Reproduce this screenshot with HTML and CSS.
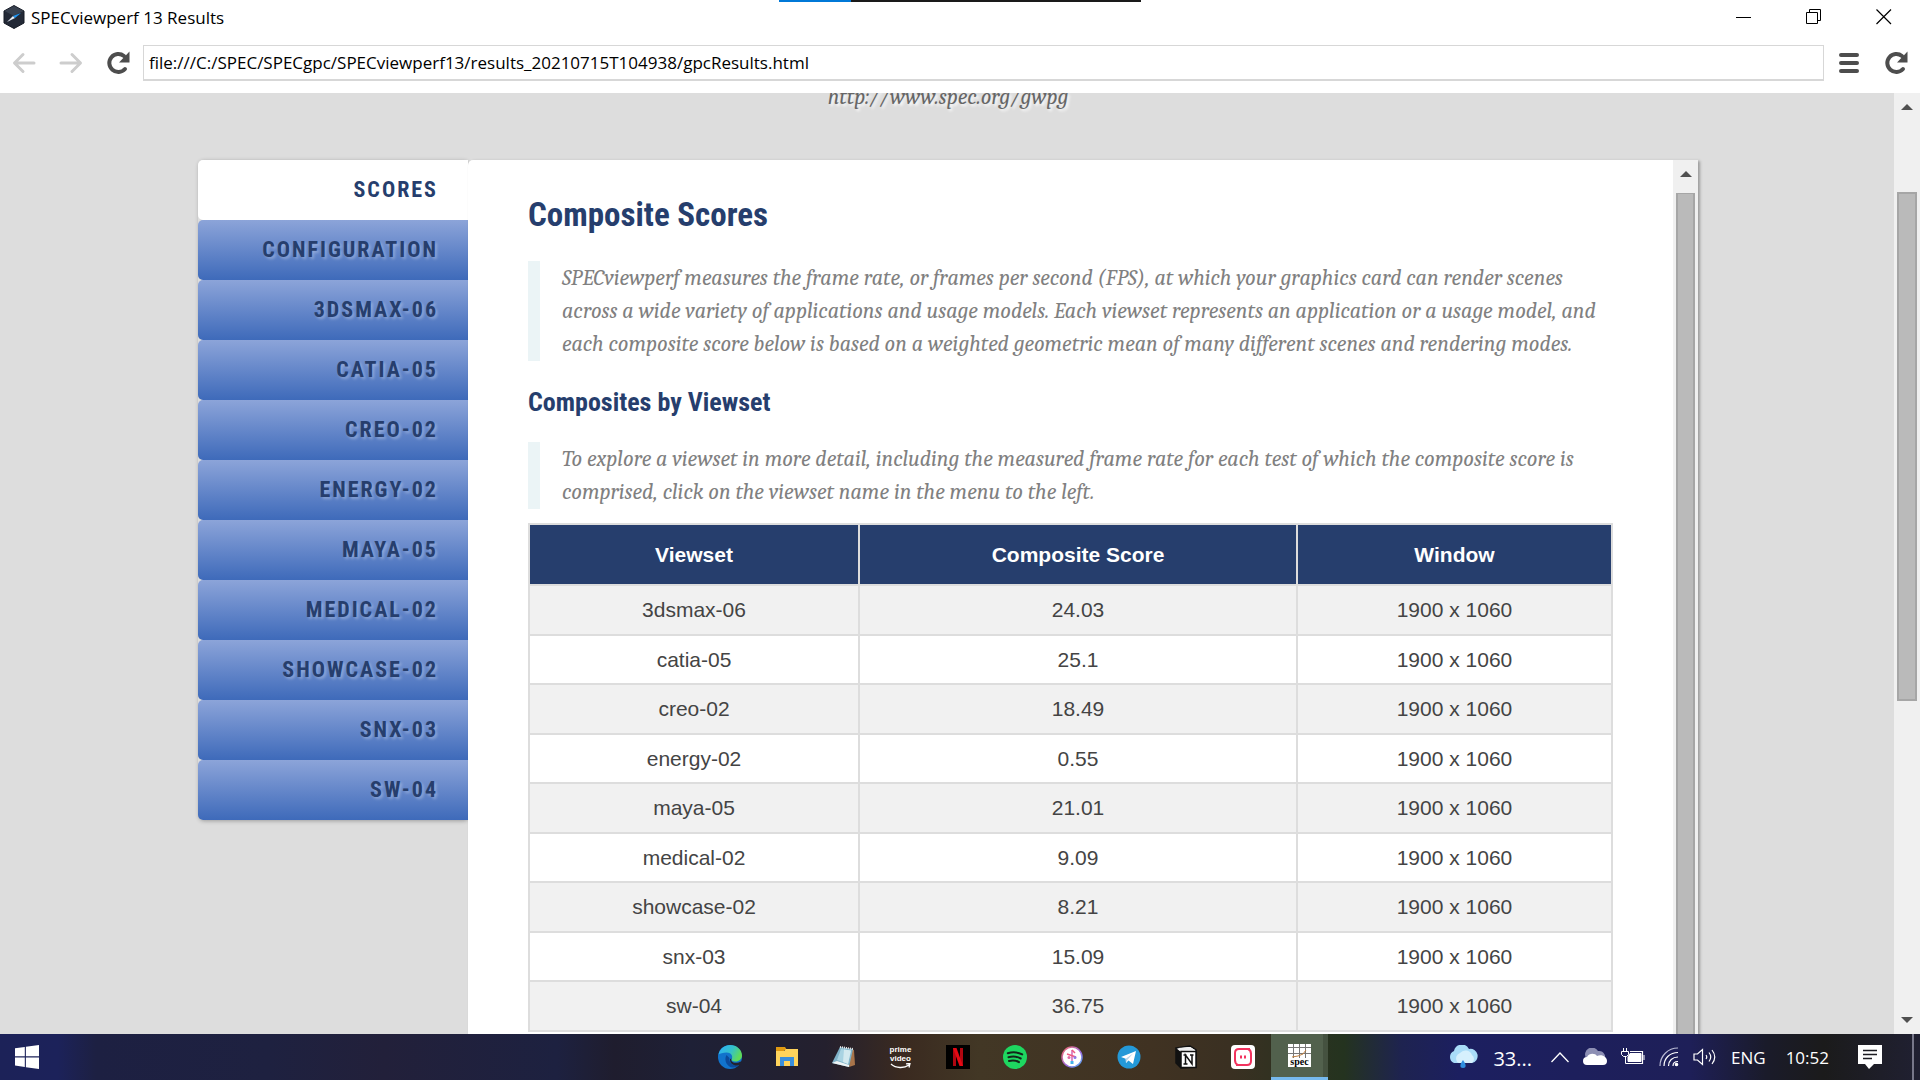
FILE: index.html
```html
<!DOCTYPE html>
<html lang="en">
<head>
  <meta charset="UTF-8">
  <meta name="viewport" content="width=device-width, initial-scale=1">
  <title>SPECviewperf 13 Results</title>
  <link rel="stylesheet" href="styles.css">
</head>
<body>
  <div class="snap-hint"><span></span></div>

  <div class="titlebar">
    <svg class="app-icon" width="22" height="24" viewBox="0 0 22 24">
      <path d="M11 0.500L21 6v12l-10 5.500L1 18V6z" fill="#232936" stroke="#151a24"/>
      <path d="M11 1l9.500 5L11 11 1.500 6z" fill="#39414f"/>
      <path d="M4 17l6-6 2 2z" fill="#e8eef5"/>
      <path d="M18 8l-8 3 2 2z" fill="#2196f3"/>
    </svg>
    <span class="title">SPECviewperf 13 Results</span>
    <div class="window-controls">
      <button aria-label="Minimize"><svg width="16" height="16"><path d="M0 8.500h15" stroke="#000"/></svg></button>
      <button aria-label="Restore"><svg width="16" height="16" fill="none" stroke="#000"><path d="M0.500 3.500h11v11h-11zM3.500 3.500v-3h11v11h-3"/></svg></button>
      <button aria-label="Close"><svg width="16" height="16"><path d="M0.500 0.500l14.500 14.500M15 0.500L0.500 15" stroke="#000" stroke-width="1.200"/></svg></button>
    </div>
  </div>

  <div class="toolbar">
    <button class="nav-btn" aria-label="Back"><svg width="24" height="24" viewBox="0 0 24 24"><path d="M22 12H3M11 3.500L2.500 12l8.500 8.500" fill="none" stroke="#cdcdcd" stroke-width="3" stroke-linecap="round" stroke-linejoin="round"/></svg></button>
    <button class="nav-btn" aria-label="Forward"><svg width="24" height="24" viewBox="0 0 24 24"><path d="M2 12h19M13 3.500l8.500 8.500-8.500 8.500" fill="none" stroke="#cdcdcd" stroke-width="3" stroke-linecap="round" stroke-linejoin="round"/></svg></button>
    <button class="nav-btn" aria-label="Reload"><svg width="24" height="24" viewBox="0 0 24 24"><path d="M19 18a9 9 0 1 1-1-13" fill="none" stroke="#4d4d4d" stroke-width="4" stroke-linecap="round"/><path d="M23.500 0.500v11H13z" fill="#4d4d4d"/></svg></button>
    <input class="address" type="text" aria-label="Address" value="file:///C:/SPEC/SPECgpc/SPECviewperf13/results_20210715T104938/gpcResults.html">
    <button class="nav-btn" aria-label="Menu"><svg width="20" height="22" viewBox="0 0 20 22"><path d="M2 3h16M2 11h16M2 19h16" stroke="#4d4d4d" stroke-width="4" stroke-linecap="round"/></svg></button>
    <button class="nav-btn" aria-label="Refresh"><svg width="24" height="24" viewBox="0 0 24 24"><path d="M19 18a9 9 0 1 1-1-13" fill="none" stroke="#4d4d4d" stroke-width="4" stroke-linecap="round"/><path d="M23.500 0.500v11H13z" fill="#4d4d4d"/></svg></button>
  </div>

  <div class="viewport">
    <div class="page">
      <p class="site-link"><a href="#">http://www.spec.org/gwpg</a></p>
      <div class="results">
        <nav class="tabs">
          <a class="active" href="#">Scores</a>
          <a href="#">Configuration</a>
          <a href="#">3dsmax-06</a>
          <a href="#">catia-05</a>
          <a href="#">creo-02</a>
          <a href="#">energy-02</a>
          <a href="#">maya-05</a>
          <a href="#">medical-02</a>
          <a href="#">showcase-02</a>
          <a href="#">snx-03</a>
          <a href="#">sw-04</a>
        </nav>
        <main class="panel">
          <div class="content">
            <h1>Composite Scores</h1>
            <blockquote>SPECviewperf measures the frame rate, or frames per second (FPS), at which your graphics card can render scenes across a wide variety of applications and usage models. Each viewset represents an application or a usage model, and each composite score below is based on a weighted geometric mean of many different scenes and rendering modes.</blockquote>
            <h2>Composites by Viewset</h2>
            <blockquote>To explore a viewset in more detail, including the measured frame rate for each test of which the composite score is comprised, click on the viewset name in the menu to the left.</blockquote>
            <table>
              <thead>
                <tr><th class="col-viewset">Viewset</th><th class="col-score">Composite Score</th><th>Window</th></tr>
              </thead>
              <tbody>
                <tr><td>3dsmax-06</td><td>24.03</td><td>1900 x 1060</td></tr>
                <tr><td>catia-05</td><td>25.1</td><td>1900 x 1060</td></tr>
                <tr><td>creo-02</td><td>18.49</td><td>1900 x 1060</td></tr>
                <tr><td>energy-02</td><td>0.55</td><td>1900 x 1060</td></tr>
                <tr><td>maya-05</td><td>21.01</td><td>1900 x 1060</td></tr>
                <tr><td>medical-02</td><td>9.09</td><td>1900 x 1060</td></tr>
                <tr><td>showcase-02</td><td>8.21</td><td>1900 x 1060</td></tr>
                <tr><td>snx-03</td><td>15.09</td><td>1900 x 1060</td></tr>
                <tr><td>sw-04</td><td>36.75</td><td>1900 x 1060</td></tr>
              </tbody>
            </table>
          </div>
          <div class="scrollbar inner">
            <div class="arrow up"></div>
            <div class="thumb"></div>
          </div>
        </main>
      </div>
    </div>
    <div class="scrollbar outer">
      <div class="arrow up"></div>
      <div class="track"><div class="thumb"></div></div>
      <div class="arrow down"></div>
    </div>
  </div>

  <footer class="taskbar">
    <button class="start" aria-label="Start">
      <svg width="24" height="24" viewBox="0 0 24 24" fill="#fff"><path d="M0 3.300l9.800-1.400V11.300H0zM10.900 1.700L24 0v11.300H10.900zM0 12.400h9.800v9.500L0 20.500zM10.900 12.400H24V24l-13.100-1.800z"/></svg>
    </button>

    <div class="apps">
      <!-- Edge -->
      <button aria-label="Edge">
        <svg width="24" height="24" viewBox="0 0 24 24">
          <defs>
            <linearGradient id="edge" x1="0" y1="0" x2="1" y2="0.400"><stop offset="0.200" stop-color="#2fb4ea"/><stop offset="0.600" stop-color="#35c1c8"/><stop offset="1" stop-color="#5fdb58"/></linearGradient>
          </defs>
          <circle cx="12" cy="12" r="12" fill="#1173cc"/>
          <path d="M0.500 9.500C2 3.500 6.500 0 12 0c7 0 12 5 12 10.500 0 3.500-3 6-6.500 6-3 0-4.500-1.500-3.800-2.500 1.300-2 .3-6.500-5.200-6.500-3.500 0-6.500 1-8 2z" fill="url(#edge)"/>
          <path d="M8.500 10c-3 5 .5 12.500 6.500 12.500 3 0 5-1.200 6.500-2.800-5 2-11-1-10-6.700z" fill="#0b4a9b"/>
          <path d="M13.500 13.500c-1.500 3 3 6.500 10.500 2.500l-2 4c-5 1.500-10.500-.5-10-6z" fill="#21222f"/>
        </svg>
      </button>
      <!-- File Explorer -->
      <button aria-label="File Explorer">
        <svg width="24" height="20" viewBox="0 0 24 20"><path d="M1 0h9l2 3h-3v2H1z" fill="#e09a12"/><path d="M1 4h8l2-2h12v17H1z" fill="#ffd45c"/><path d="M5 19v-9h14v9h-4v-5H9v5z" fill="#3a8fdc"/></svg>
      </button>
      <!-- Notepad -->
      <button aria-label="Notepad">
        <svg width="24" height="22" viewBox="0 0 24 22"><path d="M19 3l3 1 1 15-6 2z" fill="#a8744a"/><path d="M8 1l13 2-4 18L0 17z" fill="#7fb2c8"/><path d="M9 3l10 1.500L16 18 5 14z" fill="#a9d3e2"/><path d="M12 3.500l7 1L16 18l-5-2z" fill="#d3e9ef"/><path d="M0 17l5-2 12 4v2z" fill="#eef4f5"/><path d="M8 1l13 2" stroke="#e8e8e8" stroke-width="2" stroke-dasharray="1 1"/></svg>
      </button>
      <!-- Prime Video -->
      <button aria-label="Prime Video">
        <span class="prime">prime</span>
        <span class="prime">video</span>
        <svg width="22" height="6" viewBox="0 0 22 6"><path d="M1 1c5 4.500 13 4.500 18 1M16 .8l4-.3-1 4" fill="none" stroke="#fff" stroke-width="1.300"/></svg>
      </button>
      <!-- Netflix -->
      <button aria-label="Netflix">
        <svg width="24" height="24" viewBox="0 0 24 24"><path d="M0 0h24v24H0z" fill="#000"/><path d="M7 3h3v18H7zM14 3h3v18h-3z" fill="#b00610"/><path d="M7 3h3.500L17 21h-3.500z" fill="#e50914"/></svg>
      </button>
      <!-- Spotify -->
      <button aria-label="Spotify">
        <svg width="24" height="24" viewBox="0 0 24 24"><circle cx="12" cy="12" r="12" fill="#1ed760"/><path d="M4.800 8.200c5-1.400 10.200-1 14.400 1.200M5.500 12.300c4.300-1.200 8.500-.8 12.200 1.200M6 16c3.500-.9 7-.6 10 1.100" fill="none" stroke="#14261a" stroke-width="2" stroke-linecap="round"/></svg>
      </button>
      <!-- iTunes -->
      <button aria-label="iTunes">
        <svg width="22" height="22" viewBox="0 0 22 22"><defs><linearGradient id="tune" x1="0" y1="0" x2="1" y2="1"><stop offset="0" stop-color="#f46a6a"/><stop offset="0.600" stop-color="#9a6ae0"/><stop offset="1" stop-color="#4db3f5"/></linearGradient></defs><circle cx="11" cy="11" r="10" fill="#fff" stroke="url(#tune)" stroke-width="1.500"/><path d="M11 4v11" stroke="#d268b8" stroke-width="1.500"/><path d="M11 4l3 3M6 8l9 3" stroke="#ee5a80" stroke-width="1.500"/><circle cx="8" cy="11.500" r="1.500" fill="#e06aa6"/><circle cx="14" cy="11.500" r="1.500" fill="#8f7be8"/><path d="M11 15v3" stroke="#45b2ea" stroke-width="3"/></svg>
      </button>
      <!-- Telegram -->
      <button aria-label="Telegram">
        <svg width="24" height="24" viewBox="0 0 24 24"><circle cx="12" cy="12" r="11.500" fill="#2499d8"/><path d="M4 12l15-6-3 13-4.500-3.500L9 18l-.3-4.300z" fill="#fff"/><path d="M8.700 13.700L16 8.500l-5.500 6.300L9 18z" fill="#b6d4e8"/></svg>
      </button>
      <!-- Notion -->
      <button aria-label="Notion">
        <svg width="22" height="24" viewBox="0 0 22 24"><path d="M1 3l14-2 6 4v17l-15 1-5-5z" fill="#fff" stroke="#111" stroke-width="1.500"/><path d="M1 3l5 4v16l-5-5z" fill="#111"/><path d="M3 3l12-1 5 3-14 1z" fill="#eee"/><path d="M6 6.500h15v16H6z" fill="#fff" stroke="#111" stroke-width="1.500"/><path d="M10.500 19v-9l6.500 9v-9M8.500 10h3M15 10h3.500M8.500 19h4" fill="none" stroke="#111" stroke-width="1.500"/></svg>
      </button>
      <!-- Player -->
      <button aria-label="Player">
        <svg width="24" height="24" viewBox="0 0 24 24"><rect width="24" height="24" rx="4" fill="#fff"/><path d="M4 16V8q0-4 4-4h11M20 8v8q0 4-4 4H5M4 15q0 4 3 5M20 9q0-4-3-5" fill="none" stroke="#f2335e" stroke-width="2"/><path d="M10 10.500v3M14 10.500v3" stroke="#f2335e" stroke-width="2"/></svg>
      </button>
      <!-- SPEC -->
      <button class="active" aria-label="SPEC">
        <span class="spec">
          <svg width="23" height="14" viewBox="0 0 23 14"><path d="M0 3.500h23M0 9.500h23M5.500 0v14M11.500 0v14M17.500 0v14" stroke="#777"/><path d="M4 13l6-1 5-2 3-4" fill="none" stroke="#c08040"/></svg>
          <span>spec</span>
        </span>
      </button>
    </div>

    <div class="tray">
      <svg width="32" height="24" viewBox="0 0 32 24"><path d="M7 18a6.500 6.500 0 0 1 0-12 8 8 0 0 1 15-2 7 7 0 0 1 3 14z" fill="#a9dcf8"/><path d="M10 17a6 6 0 0 1 3-9 7 7 0 0 1 12 2 5 5 0 0 1 0 8H12z" fill="#d6f0fd"/><path d="M16 15c-3.500 4.500-3.500 8 0 8s3.500-3.500 0-8z" fill="#2f8fe0"/></svg>
      <span class="temp">33...</span>
      <svg class="chevron" width="18" height="12" viewBox="0 0 18 12"><path d="M0.500 11L9 2l8.500 9" fill="none" stroke="#fff" stroke-width="1.300"/></svg>
      <svg width="24" height="18" viewBox="0 0 24 18"><path d="M3 10a6.500 6.500 0 0 1 12-7 6 6 0 0 1 7 7z" fill="#8d8fb4"/><path d="M4 17a4 4 0 0 1 0-8c2-4 8-4 10-1 5-2 10 1 10 5q0 4-4 4z" fill="#fff"/></svg>
      <svg width="24" height="18" viewBox="0 0 24 18" fill="none" stroke="#fff"><path d="M2.500 0v3M5.500 0v3M0.500 3.500h7v3l-2 2h-3l-2-2zM4.500 8v7.500"/><path d="M9 3.500h12.500v12H4.500" stroke-width="1.200"/><path d="M9 5.500h11v8H7V9z" fill="#fff"/><path d="M23 7v5"/></svg>
      <svg width="20" height="20" viewBox="0 0 20 20" fill="none" stroke="#fff" stroke-width="1.200"><path d="M1 19C1 9 9 1 19 1" stroke="#b9bad4"/><path d="M5 19C5 11 11 5.500 19 5.500M9.500 19c0-5.500 4-9 9.500-9M14 19c0-3 2-4.500 5-4.500"/><circle cx="17.500" cy="17.500" r="1.200" fill="#fff"/></svg>
      <svg width="24" height="20" viewBox="0 0 24 20" fill="none" stroke="#fff" stroke-width="1.200"><path d="M1 7v6h3.500l5 4.500v-15L4.500 7zM13 8q1.500 2 0 4M16 5.500q3.500 4.500 0 9M19 3q5.500 7 0 14"/></svg>
      <span class="lang">ENG</span>
      <time>10:52</time>
      <svg width="24" height="24" viewBox="0 0 24 24"><path d="M0 0h24v19h-8l-5 5-4-5H0z" fill="#fff"/><path d="M5 5.500h14M5 9.500h14M5 13.500h9" stroke="#1c1c22" stroke-width="1.300"/></svg>
      <span class="show-desktop"></span>
    </div>
  </footer>
</body>
</html>
```
FILE: styles.css
```css
/* Global */
*, *::before, *::after { box-sizing: border-box; }
body {
  display: flex;
  flex-direction: column;
  height: 100vh;
  margin: 0;
  overflow: hidden;
  background: #fff;
  font-family: "Segoe UI", "Open Sans", sans-serif;
}
button { border: 0; padding: 0; background: none; cursor: pointer; }
svg { display: block; }

/* Strip hanging over the top edge of the window */
.snap-hint {
  position: absolute;
  top: 0;
  left: 50%;
  width: 362px;
  height: 2px;
  margin-left: -181px;
  background: #1a1a1a;
}
.snap-hint span { display: block; width: 72px; height: 2px; background: #0078d7; }

/* Title bar */
.titlebar {
  display: flex;
  align-items: center;
  height: 34px;
  flex: none;
  padding: 0 1px 0 3px;
}
.title { margin-left: 6px; font-size: 17px; }
.window-controls { display: flex; margin-left: auto; }
.window-controls button {
  display: flex;
  align-items: center;
  justify-content: center;
  width: 70px;
  height: 34px;
}

/* Toolbar */
.toolbar {
  display: flex;
  align-items: center;
  gap: 23px;
  height: 59px;
  flex: none;
  padding: 0 12px 1px;
}
.nav-btn { display: flex; justify-content: center; width: 24px; }
.address {
  flex: 1;
  height: 36px;
  margin: 0 -10px;
  padding: 0 5px;
  border: 1px solid #d7d7d7;
  border-bottom-width: 2px;
  font: 17px "Segoe UI", "Open Sans", sans-serif;
  color: #000;
}

/* Viewport */
.viewport { display: flex; flex: 1; min-height: 0; background: #ddd; }
.page { flex: 1; padding: 0 20px 0 22px; overflow: hidden; display: flex; flex-direction: column; }
.site-link {
  margin: -12px 0 46px;
  line-height: 33px;
  text-align: center;
  font-size: 22px;
  font-style: italic;
  font-family: Cambria, "Liberation Serif", serif;
}
.site-link a {
  color: #666;
  text-decoration: none;
  text-shadow: 2px 2px 3px #fff;
}
.results { display: flex; flex: 1; min-height: 0; width: 100%; max-width: 1500px; margin: 0 auto; }

/* Tabs */
.tabs { width: 270px; flex: none; align-self: flex-start; box-shadow: 1px 1px 4px rgba(0,0,0,0.3); border-radius: 5px; }
.tabs a {
  display: block;
  height: 60px;
  padding-right: 30px;
  border-radius: 5px 0 0 5px;
  background: linear-gradient(#8ca4d9, #3e6aba);
  color: #263e6d;
  font: bold 22px/60px "Liberation Sans Narrow", "Roboto Condensed", Roboto, sans-serif;
  letter-spacing: 2px;
  text-align: right;
  text-transform: uppercase;
  text-decoration: none;
  text-shadow: 2px 2px 3px rgba(255,255,255,0.3);
}
.tabs a.active { background: #fff; }

/* Panel */
.panel {
  display: flex;
  flex: 1;
  background: #fff;
  border-radius: 5px 0 0 0;
  box-shadow: 2px 1px 3px rgba(0,0,0,0.3);
}
.content { flex: 1; padding: 0 60px; }
h1, h2 {
  margin: 0;
  color: #263e6d;
  font-family: "Liberation Sans Narrow", "Roboto Condensed", Roboto, sans-serif;
}
h1 { padding: 35px 0 26px; font-size: 33px; line-height: 40px; }
h2 { padding: 25px 0 24px; font-size: 26px; line-height: 32px; }
blockquote {
  margin: 0;
  padding: 1px 0 0 22px;
  border-left: 12px solid #ebf4f6;
  color: #808080;
  font: italic 22px/33px Cambria, "Liberation Serif", serif;
}

/* Score table */
table {
  width: 100%;
  margin-top: 14px;
  border-collapse: collapse;
  table-layout: fixed;
  font: 21px/32px "Liberation Sans", Arial, sans-serif;
  color: #444;
  text-align: center;
}
th, td { padding: 8px; border: 2px solid #ddd; }
th { padding: 14px 8px 13px; background: #263e6d; color: #fff; }
tbody tr:nth-child(odd) { background: #f1f1f1; }
tbody tr:nth-child(even) td { padding-bottom: 7px; }
.col-viewset { width: 330px; }
.col-score { width: 438px; }

/* Scrollbars */
.scrollbar { display: flex; flex-direction: column; align-items: center; background: #f0f0f0; }
.inner { width: 25px; padding-top: 11px; }
.outer { width: 26px; padding: 11px 0; }
.arrow { border: 6px solid transparent; border-top-width: 0; border-bottom: 6px solid #505050; }
.arrow.down { transform: rotate(180deg); }
.thumb { width: 20px; background: #bababa; border: 2px solid #a6a6a6; }
.inner .thumb { flex: 1; width: 19px; margin-top: 16px; border-width: 1px 2px 0; }
.track { display: flex; flex-direction: column; flex: 1; padding-top: 82px; }
.track .thumb { flex: 8; }
.track::after { content: ""; flex: 5; }

/* Taskbar */
.taskbar {
  display: flex;
  align-items: center;
  flex: none;
  height: 46px;
  color: #fff;
  background: linear-gradient(90deg, #1c2258 0%, #1c225a 3%, #1d2042 5%, #1e2140 14%, #22203a 20%, #1d2140 29%, #1f1d2e 32%, #1e2036 36%, #24202e 43%, #3a2a20 47%, #423725 51%, #403222 60%, #3a3022 64%, #24331f 70%, #1e2350 73%, #1c1f60 76%, #1e1f58 88%, #1a1b2a 92%, #1b1b1b 95%, #202032 100%);
}
.start { width: 54px; height: 46px; padding-left: 15px; }
.apps { display: flex; margin-left: 647px; }
.apps button {
  display: flex;
  flex-direction: column;
  align-items: center;
  justify-content: center;
  width: 57px;
  height: 46px;
  color: #fff;
}
.apps .active { background: #52614d; border-bottom: 3px solid #76b9ed; box-shadow: inset -5px 0 #455240; }
.prime { font: bold 8px/9px "Liberation Sans", sans-serif; }
.spec {
  width: 23px;
  height: 23px;
  overflow: hidden;
  background: #fff;
  color: #000;
  font: bold 10px/8px "Liberation Serif", serif;
  text-align: center;
}

.tray { display: flex; align-items: center; gap: 14px; height: 46px; margin-left: auto; }
.temp { padding-top: 2px; font-size: 20px; }
.chevron { margin-left: 5px; }
.lang, .tray time { font-size: 17px; }
.tray time { margin: 0 15px 0 6px; }
.show-desktop { width: 8px; height: 46px; margin-left: 16px; border-left: 2px solid #77778a; }
```
